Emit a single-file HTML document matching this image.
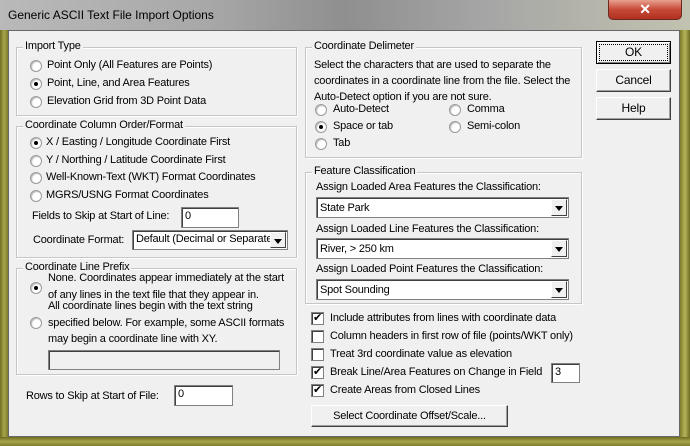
<!DOCTYPE html>
<html><head><style>
*{margin:0;padding:0;box-sizing:border-box}
body{width:690px;height:446px;overflow:hidden;background:#8c8a3a;font-family:"Liberation Sans",sans-serif;font-size:11px;letter-spacing:-0.2px;color:#000;position:relative}
.a{position:absolute;white-space:nowrap}
.title{left:0;top:0;width:690px;height:30px;background:linear-gradient(90deg,#b9b9b9 0%,#a8a8a8 30%,#8f8f8f 50%,#a5a5a5 70%,#c2c2b0 100%)}
.frameL{left:0;top:30px;width:8px;height:416px;background:linear-gradient(90deg,#6e6c20,#a8a64a,#7e7c2c)}
.frameR{left:680px;top:30px;width:10px;height:416px;background:linear-gradient(90deg,#7e7c2c,#b6b45a,#6e6c20)}
.frameB{left:0;top:437px;width:690px;height:9px;background:linear-gradient(180deg,#6e6c20,#a8a64a,#7e7c2c)}
.body{left:8px;top:30px;width:672px;height:407px;background:#f0f0f0;border:1px solid #666}
.close{left:608px;top:0;width:74px;height:20px;background:linear-gradient(#e8a090,#c74a36 50%,#b03020);border:1px solid #6a2a20;border-top:none;border-radius:0 0 5px 5px;color:#fff;font-weight:bold;font-size:14px;text-align:center;line-height:18px}
.grp{position:absolute;border:1px solid #c6c6c6;box-shadow:inset 1px 1px 0 #fff,1px 1px 0 #fff}
.lg{position:absolute;background:#f0f0f0;padding:0 2px;top:-8px;left:6px;white-space:nowrap}
.rd{position:absolute;width:12px;height:12px;border-radius:50%;background:#fff;border:1px solid #9a9a9a;box-shadow:inset 1px 1px 1px #bbb}
.rd.on::after{content:"";position:absolute;left:3px;top:3px;width:4px;height:4px;border-radius:50%;background:#000}
.cb{position:absolute;width:13px;height:13px;background:#fff;border:1px solid #808080;box-shadow:inset 1px 1px 0 #404040}
.cb.on::after{content:"✔";position:absolute;left:1px;top:-2px;font-size:11px}
.inp{position:absolute;background:#fff;border:1px solid #808080;box-shadow:inset 1px 1px 0 #404040;padding:2px 3px;white-space:nowrap;overflow:hidden}
.sel{position:absolute;background:#fff;border:1px solid #808080;box-shadow:inset 1px 1px 0 #404040;padding:4px 3px;white-space:nowrap;overflow:hidden}
.sel .ar{position:absolute;right:1px;top:1px;bottom:1px;width:16px;background:#f0f0f0;border:1px solid;border-color:#fff #404040 #404040 #fff}
.sel .ar::after{content:"";position:absolute;left:3px;top:6px;border:4px solid transparent;border-top:5px solid #000;border-bottom:none}
.btn{position:absolute;background:#f0f0f0;border:1px solid;border-color:#fff #404040 #404040 #fff;box-shadow:inset -1px -1px 0 #a0a0a0;text-align:center;font-size:12px}
</style></head><body>
<div class="a title"></div>
<div class="a" style="left:8px;top:8px;font-size:12px;letter-spacing:0">Generic ASCII Text File Import Options</div>
<div class="a close">✕</div>
<div class="a frameL"></div><div class="a frameR"></div><div class="a frameB"></div>
<div class="a body"></div>

<!-- Import Type -->
<div class="grp" style="left:16px;top:47px;width:281px;height:69px"><span class="lg">Import Type</span></div>
<div class="rd" style="left:30px;top:60px"></div><div class="a" style="left:47px;top:59px">Point Only (All Features are Points)</div>
<div class="rd on" style="left:30px;top:78px"></div><div class="a" style="left:47px;top:77px">Point, Line, and Area Features</div>
<div class="rd" style="left:30px;top:96px"></div><div class="a" style="left:47px;top:95px">Elevation Grid from 3D Point Data</div>

<!-- Coordinate Column -->
<div class="grp" style="left:16px;top:126px;width:281px;height:132px"><span class="lg">Coordinate Column Order/Format</span></div>
<div class="rd on" style="left:30px;top:137px"></div><div class="a" style="left:46px;top:136px">X / Easting / Longitude Coordinate First</div>
<div class="rd" style="left:30px;top:155px"></div><div class="a" style="left:46px;top:154px">Y / Northing / Latitude Coordinate First</div>
<div class="rd" style="left:30px;top:172px"></div><div class="a" style="left:46px;top:171px">Well-Known-Text (WKT) Format Coordinates</div>
<div class="rd" style="left:30px;top:190px"></div><div class="a" style="left:46px;top:189px">MGRS/USNG Format Coordinates</div>
<div class="a" style="left:32px;top:210px">Fields to Skip at Start of Line:</div>
<div class="inp" style="left:181px;top:207px;width:58px;height:21px">0</div>
<div class="a" style="left:33px;top:234px">Coordinate Format:</div>
<div class="sel" style="left:132px;top:230px;width:156px;height:20px;padding-top:2px">Default (Decimal or Separate<span class="ar"></span></div>

<!-- Prefix -->
<div class="grp" style="left:16px;top:268px;width:281px;height:107px"><span class="lg">Coordinate Line Prefix</span></div>
<div class="rd on" style="left:30px;top:282px"></div>
<div class="a" style="left:48px;top:270px;line-height:16.5px">None. Coordinates appear immediately at the start<br>of any lines in the text file that they appear in.</div>
<div class="rd" style="left:30px;top:317px"></div>
<div class="a" style="left:48px;top:298px;line-height:16.5px">All coordinate lines begin with the text string<br>specified below. For example, some ASCII formats<br>may begin a coordinate line with XY.</div>
<div class="inp" style="left:48px;top:350px;width:232px;height:20px;background:#f0f0f0"></div>

<div class="a" style="left:26px;top:390px">Rows to Skip at Start of File:</div>
<div class="inp" style="left:174px;top:385px;width:59px;height:21px">0</div>

<!-- Delimeter -->
<div class="grp" style="left:305px;top:47px;width:277px;height:111px"><span class="lg">Coordinate Delimeter</span></div>
<div class="a" style="left:314px;top:57px;line-height:16px">Select the characters that are used to separate the<br>coordinates in a coordinate line from the file. Select the<br>Auto-Detect option if you are not sure.</div>
<div class="rd" style="left:315px;top:104px"></div><div class="a" style="left:333px;top:103px">Auto-Detect</div>
<div class="rd" style="left:449px;top:104px"></div><div class="a" style="left:467px;top:103px">Comma</div>
<div class="rd on" style="left:315px;top:121px"></div><div class="a" style="left:333px;top:120px">Space or tab</div>
<div class="rd" style="left:449px;top:121px"></div><div class="a" style="left:467px;top:120px">Semi-colon</div>
<div class="rd" style="left:315px;top:138px"></div><div class="a" style="left:333px;top:137px">Tab</div>

<!-- Feature Classification -->
<div class="grp" style="left:305px;top:172px;width:277px;height:132px"><span class="lg">Feature Classification</span></div>
<div class="a" style="left:316px;top:181px">Assign Loaded Area Features the Classification:</div>
<div class="sel" style="left:316px;top:197px;width:253px;height:21px">State Park<span class="ar"></span></div>
<div class="a" style="left:316px;top:223px">Assign Loaded Line Features the Classification:</div>
<div class="sel" style="left:316px;top:238px;width:253px;height:21px">River, &gt; 250 km<span class="ar"></span></div>
<div class="a" style="left:316px;top:263px">Assign Loaded Point Features the Classification:</div>
<div class="sel" style="left:316px;top:279px;width:253px;height:21px">Spot Sounding<span class="ar"></span></div>

<!-- checkboxes -->
<div class="cb on" style="left:311px;top:312px"></div><div class="a" style="left:330px;top:312px">Include attributes from lines with coordinate data</div>
<div class="cb" style="left:311px;top:330px"></div><div class="a" style="left:330px;top:330px">Column headers in first row of file (points/WKT only)</div>
<div class="cb" style="left:311px;top:348px"></div><div class="a" style="left:330px;top:348px">Treat 3rd coordinate value as elevation</div>
<div class="cb on" style="left:311px;top:366px"></div><div class="a" style="left:330px;top:366px">Break Line/Area Features on Change in Field</div>
<div class="inp" style="left:551px;top:363px;width:29px;height:20px">3</div>
<div class="cb on" style="left:311px;top:384px"></div><div class="a" style="left:330px;top:384px">Create Areas from Closed Lines</div>
<div class="btn" style="left:311px;top:405px;width:197px;height:22px;line-height:20px;font-size:11px">Select Coordinate Offset/Scale...</div>

<!-- buttons -->
<div class="btn" style="left:596px;top:41px;width:75px;height:23px;line-height:21px;border-color:#000;box-shadow:inset 1px 1px 0 #fff,inset -1px -1px 0 #808080"><span style="border:1px dotted #000;display:block;margin:2px;line-height:15px">OK</span></div>
<div class="btn" style="left:596px;top:69px;width:75px;height:23px;line-height:21px">Cancel</div>
<div class="btn" style="left:596px;top:97px;width:75px;height:23px;line-height:21px">Help</div>
</body></html>
